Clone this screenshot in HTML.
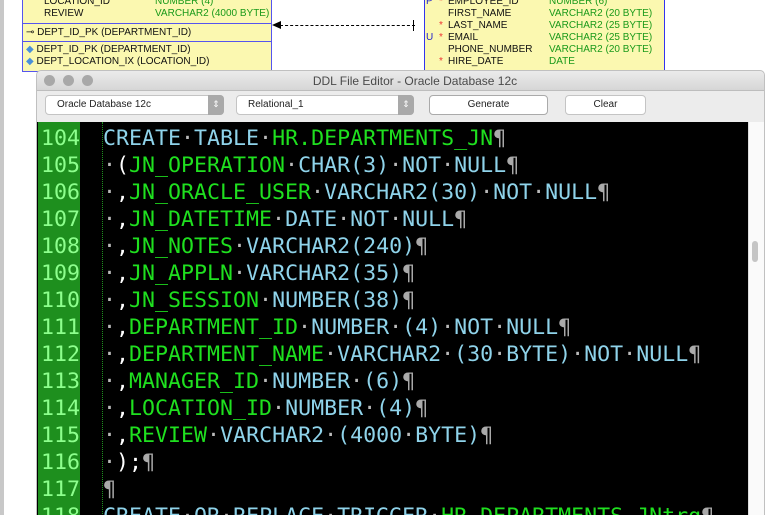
<!DOCTYPE html>
<html><head><style>
*{margin:0;padding:0;box-sizing:border-box}
html,body{width:770px;height:515px;overflow:hidden}
body{background:#fff;position:relative;font-family:"Liberation Sans",sans-serif}
.abs{position:absolute}
.erd{font-size:10px;color:#111;white-space:pre;line-height:12px}
.g{color:#1a9a1a}
.code{font-family:"DejaVu Sans Mono",monospace;font-size:21.6px;line-height:27px;white-space:pre;color:#fff}
.k{color:#8fd3ea}.i{color:#1fe01f}.d{color:#bbb}.p{color:#aaa}
.ln{font-family:"DejaVu Sans Mono",monospace;font-size:21.6px;line-height:27px;color:#8dff8d;text-align:right;white-space:pre}
.btn{position:absolute;top:95px;height:20px;background:#fff;border:1px solid #c4c4c4;border-radius:4px;font-size:10px;line-height:18px;color:#222}
</style></head><body>
<div class="abs" style="left:0;top:0;width:4px;height:515px;background:#c8c8c8"></div>
<div class="abs" style="left:22px;top:-2px;width:250px;height:74px;background:#fbf8b0;border:1px solid #5555ee"></div>
<div class="abs" style="left:22px;top:23px;width:250px;height:1px;background:#5555ee"></div>
<div class="abs" style="left:22px;top:41px;width:250px;height:1px;background:#5555ee"></div>
<div class="abs erd" style="left:44px;top:-4px">LOCATION_ID
REVIEW</div>
<div class="abs erd g" style="left:155px;top:-4px">NUMBER (4)
VARCHAR2 (4000 BYTE)</div>
<div class="abs erd" style="left:26px;top:27px">⊸ DEPT_ID_PK (DEPARTMENT_ID)</div>
<div class="abs erd" style="left:26px;top:44px"><span style="color:#4a90d9">◆</span> DEPT_ID_PK (DEPARTMENT_ID)
<span style="color:#4a90d9">◆</span> DEPT_LOCATION_IX (LOCATION_ID)</div>
<div class="abs" style="left:280px;top:25px;width:135px;border-top:1px dashed #000"></div>
<div class="abs" style="left:272px;top:21px;width:0;height:0;border-top:4px solid transparent;border-bottom:4px solid transparent;border-right:9px solid #000"></div>
<div class="abs" style="left:413px;top:20px;width:1px;height:11px;background:#000"></div>
<div class="abs" style="left:424px;top:-2px;width:241px;height:74px;background:#fbf8b0;border:1px solid #3333ee"></div>
<div class="abs erd" style="left:426px;top:-4px;color:#2222cc">P

 
U</div>
<div class="abs erd" style="left:439px;top:-4px;color:#e33">*

*
*

*</div>
<div class="abs erd" style="left:448px;top:-4px">EMPLOYEE_ID
FIRST_NAME
LAST_NAME
EMAIL
PHONE_NUMBER
HIRE_DATE</div>
<div class="abs erd g" style="left:549px;top:-4px">NUMBER (6)
VARCHAR2 (20 BYTE)
VARCHAR2 (25 BYTE)
VARCHAR2 (25 BYTE)
VARCHAR2 (20 BYTE)
DATE</div>
<div class="abs" style="left:36px;top:70px;width:729px;height:450px;background:#ececec;border:1px solid #c0c0c0;border-radius:5px 5px 0 0"></div>
<div class="abs" style="left:37px;top:71px;width:727px;height:20px;background:linear-gradient(#ebebeb,#d6d6d6);border-bottom:1px solid #bdbdbd;border-radius:5px 5px 0 0"></div>
<div class="abs" style="left:44px;top:75px;width:11px;height:11px;border-radius:50%;background:#a8a8a8"></div>
<div class="abs" style="left:63px;top:75px;width:11px;height:11px;border-radius:50%;background:#a8a8a8"></div>
<div class="abs" style="left:82px;top:75px;width:11px;height:11px;border-radius:50%;background:#a8a8a8"></div>
<div class="abs" style="left:0;width:770px;top:74px;text-align:center;font-size:12px;color:#4a4a4a;padding-left:60px">DDL File Editor - Oracle Database 12c</div>
<div class="btn" style="left:45px;width:179px;padding-left:11px">Oracle Database 12c<span style="position:absolute;right:-1px;top:-1px;width:16px;height:20px;background:#a9a9a9;border-radius:0 4px 4px 0;color:#fff;font-size:9px;text-align:center;line-height:19px">⇕</span></div>
<div class="btn" style="left:236px;width:178px;padding-left:11px">Relational_1<span style="position:absolute;right:-1px;top:-1px;width:16px;height:20px;background:#a9a9a9;border-radius:0 4px 4px 0;color:#fff;font-size:9px;text-align:center;line-height:19px">⇕</span></div>
<div class="btn" style="left:429px;width:119px;text-align:center;border-color:#aaa">Generate</div>
<div class="btn" style="left:565px;width:81px;text-align:center">Clear</div>
<div class="abs" style="left:37px;top:122px;width:711px;height:400px;background:#000"></div>
<div class="abs" style="left:38px;top:122px;width:42px;height:400px;background:#1e8f1e"></div>
<div class="abs" style="left:102px;top:122px;height:400px;border-left:1px dotted #1e8f1e"></div>
<div class="abs" style="left:748px;top:122px;width:16px;height:400px;background:#fafafa;border-left:1px solid #ddd"></div>
<div class="abs" style="left:752px;top:241px;width:6px;height:21px;background:#c5c5c5;border-radius:3px"></div>
<div class="abs ln" style="left:38px;top:125px;width:42px">104
105
106
107
108
109
110
111
112
113
114
115
116
117
118</div>
<div class="abs code" style="left:103px;top:125px"><span class="k">CREATE</span><span class="d">·</span><span class="k">TABLE</span><span class="d">·</span><span class="i">HR.DEPARTMENTS_JN</span><span class="p">¶</span>
<span class="d">·</span>(<span class="i">JN_OPERATION</span><span class="d">·</span><span class="k">CHAR(3)</span><span class="d">·</span><span class="k">NOT</span><span class="d">·</span><span class="k">NULL</span><span class="p">¶</span>
<span class="d">·</span>,<span class="i">JN_ORACLE_USER</span><span class="d">·</span><span class="k">VARCHAR2(30)</span><span class="d">·</span><span class="k">NOT</span><span class="d">·</span><span class="k">NULL</span><span class="p">¶</span>
<span class="d">·</span>,<span class="i">JN_DATETIME</span><span class="d">·</span><span class="k">DATE</span><span class="d">·</span><span class="k">NOT</span><span class="d">·</span><span class="k">NULL</span><span class="p">¶</span>
<span class="d">·</span>,<span class="i">JN_NOTES</span><span class="d">·</span><span class="k">VARCHAR2(240)</span><span class="p">¶</span>
<span class="d">·</span>,<span class="i">JN_APPLN</span><span class="d">·</span><span class="k">VARCHAR2(35)</span><span class="p">¶</span>
<span class="d">·</span>,<span class="i">JN_SESSION</span><span class="d">·</span><span class="k">NUMBER(38)</span><span class="p">¶</span>
<span class="d">·</span>,<span class="i">DEPARTMENT_ID</span><span class="d">·</span><span class="k">NUMBER</span><span class="d">·</span><span class="k">(4)</span><span class="d">·</span><span class="k">NOT</span><span class="d">·</span><span class="k">NULL</span><span class="p">¶</span>
<span class="d">·</span>,<span class="i">DEPARTMENT_NAME</span><span class="d">·</span><span class="k">VARCHAR2</span><span class="d">·</span><span class="k">(30</span><span class="d">·</span><span class="k">BYTE)</span><span class="d">·</span><span class="k">NOT</span><span class="d">·</span><span class="k">NULL</span><span class="p">¶</span>
<span class="d">·</span>,<span class="i">MANAGER_ID</span><span class="d">·</span><span class="k">NUMBER</span><span class="d">·</span><span class="k">(6)</span><span class="p">¶</span>
<span class="d">·</span>,<span class="i">LOCATION_ID</span><span class="d">·</span><span class="k">NUMBER</span><span class="d">·</span><span class="k">(4)</span><span class="p">¶</span>
<span class="d">·</span>,<span class="i">REVIEW</span><span class="d">·</span><span class="k">VARCHAR2</span><span class="d">·</span><span class="k">(4000</span><span class="d">·</span><span class="k">BYTE)</span><span class="p">¶</span>
<span class="d">·</span>);<span class="p">¶</span>
<span class="p">¶</span>
<span class="k">CREATE</span><span class="d">·</span><span class="k">OR</span><span class="d">·</span><span class="k">REPLACE</span><span class="d">·</span><span class="k">TRIGGER</span><span class="d">·</span><span class="i">HR.DEPARTMENTS_JNtrg</span><span class="p">¶</span></div>
</body></html>
